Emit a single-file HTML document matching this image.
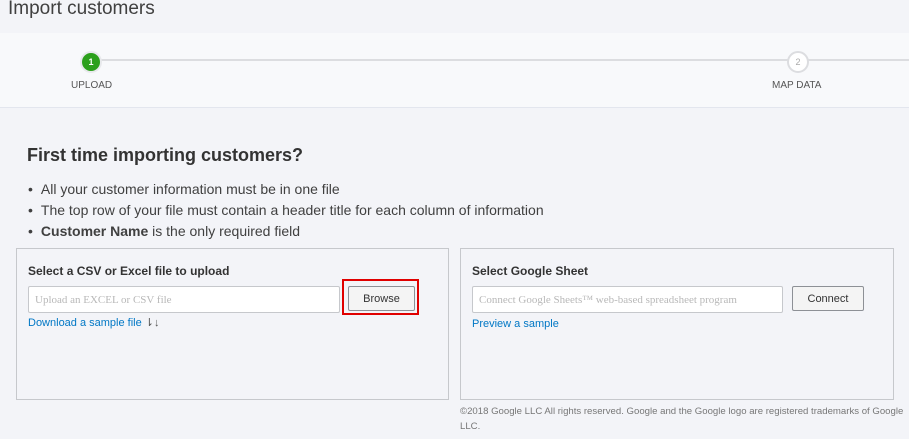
<!DOCTYPE html>
<html><head><style>
*{margin:0;padding:0;box-sizing:border-box}
body{width:909px;height:439px;background:#f3f4f8;font-family:"Liberation Sans",sans-serif;position:relative;overflow:hidden;color:#393a3d}
.abs{position:absolute}
.title{left:8px;top:-2px;font-size:19px;color:#404040}
.band{left:0;top:33px;width:909px;height:75px;background:#f8f9fb;border-bottom:1px solid #e3e6ee}
.line{left:92px;top:59px;width:820px;height:2px;background:#dcdde0}
.c1{left:80px;top:51px;width:22px;height:22px;border-radius:50%;background:#2ca01c;border:2px solid #e8e9ec;color:#fff;font-size:9px;font-weight:bold;text-align:center;line-height:18px}
.c2{left:787px;top:51px;width:22px;height:22px;border-radius:50%;background:#fff;border:2px solid #dcdde0;color:#aaa;font-size:9px;text-align:center;line-height:18px}
.lbl{font-size:10px;color:#555;top:80px}
h2{position:absolute;left:27px;top:145px;font-size:18px;font-weight:bold;color:#333}
ul{position:absolute;left:28px;top:179px;list-style:none;font-size:14px;line-height:21px;color:#404040}
ul li:before{content:"•";margin-right:8px}
.box{top:248px;height:152px;border:1px solid #c6c8cc;background:#f3f4f8}
.bt{font-size:12px;font-weight:bold;color:#333;top:264px}
.inp{height:27px;top:286px;background:#fff;border:1px solid #c6c8cc;border-radius:2px;font-family:"Liberation Serif",serif;font-size:11px;color:#b8b8b8;padding:7px 6px}
.btn{height:25px;background:#f4f4f4;border:1px solid #8d9096;border-radius:2px;font-size:11px;text-align:center;line-height:24px;color:#333}
.link{font-size:11px;color:#0077c5}
</style></head><body>
<div class="abs title">Import customers</div>
<div class="abs band"></div>
<div class="abs line"></div>
<div class="abs c1">1</div>
<div class="abs c2">2</div>
<div class="abs lbl" style="left:71px">UPLOAD</div>
<div class="abs lbl" style="left:772px">MAP DATA</div>
<h2>First time importing customers?</h2>
<ul><li>All your customer information must be in one file</li><li>The top row of your file must contain a header title for each column of information</li><li><b>Customer Name</b> is the only required field</li></ul>
<div class="abs box" style="left:16px;width:433px"></div>
<div class="abs box" style="left:460px;width:434px"></div>
<div class="abs bt" style="left:28px">Select a CSV or Excel file to upload</div>
<div class="abs bt" style="left:472px">Select Google Sheet</div>
<div class="abs inp" style="left:28px;width:312px">Upload an EXCEL or CSV file</div>
<div class="abs inp" style="left:472px;width:311px">Connect Google Sheets™ web-based spreadsheet program</div>
<div class="abs" style="left:342px;top:279px;width:77px;height:36px;border:2px solid #e00000"></div>
<div class="abs btn" style="left:348px;top:286px;width:67px">Browse</div>
<div class="abs btn" style="left:792px;top:286px;width:72px">Connect</div>
<div class="abs link" style="left:28px;top:316px">Download a sample file <span style="color:#555">⇂↓</span></div>
<div class="abs link" style="left:472px;top:318px">Preview a sample</div>
<div class="abs" style="left:460px;top:404px;width:445px;font-size:9.6px;line-height:15px;color:#777">©2018 Google LLC All rights reserved. Google and the Google logo are registered trademarks of Google LLC.</div>
</body></html>
